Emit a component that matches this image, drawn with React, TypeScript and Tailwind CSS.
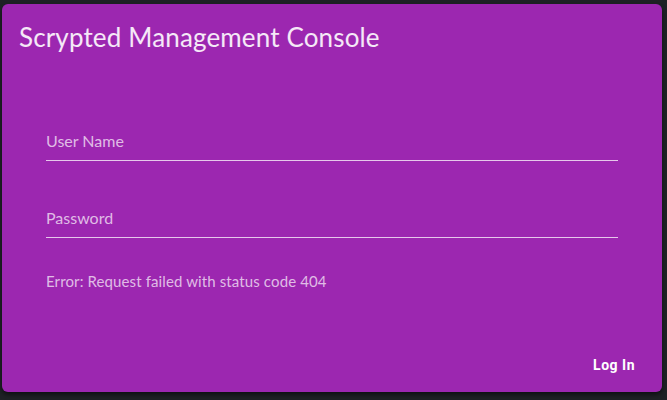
export default function App() {
  return (
    <div className="w-[667px] h-[400px] bg-[#1e2125] pl-[2px] pt-[4px] overflow-hidden">
      <div
        className="w-[660px] h-[388px] bg-[#9c27b0] rounded-[6px] shadow-[0_3px_4px_rgba(0,0,0,0.5)] flex flex-col pt-[17px] pb-[17px]"
        style={{ fontFamily: "Lato, 'Noto Sans', sans-serif" }}
      >
        <h1 className="px-[17px] text-[26px] leading-[32px] font-normal text-white/90 tracking-[0.15px]">
          Scrypted Management Console
        </h1>

        <div className="px-[44px] mt-[76px]">
          <div className="border-b border-white/75 pb-[7px]">
            <span className="text-[16px] leading-[24px] text-white/70">User Name</span>
          </div>
          <div className="border-b border-white/75 pb-[7px] mt-[45px]">
            <span className="text-[16px] leading-[24px] text-white/70">Password</span>
          </div>
          <p className="mt-[33px] text-[15px] leading-[20px] text-white/70 tracking-[0.12px]">
            Error: Request failed with status code 404
          </p>
        </div>

        <div className="mt-auto flex justify-end pr-[27px]">
          <button
            className="text-[14px] leading-[20px] font-bold text-white tracking-[0.5px]"
            style={{ fontFamily: "Roboto, sans-serif" }}
          >
            Log In
          </button>
        </div>
      </div>
    </div>
  );
}
